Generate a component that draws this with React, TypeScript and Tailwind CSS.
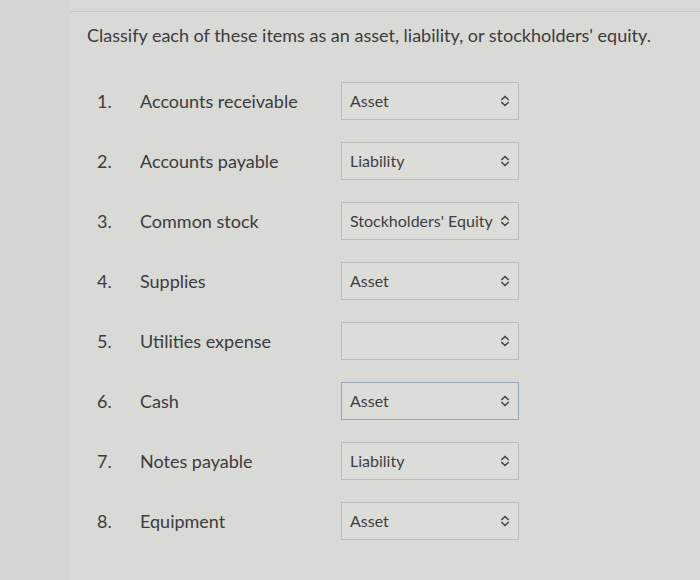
const items: { n: string; label: string; value: string; focused?: boolean }[] = [
  { n: "1.", label: "Accounts receivable", value: "Asset" },
  { n: "2.", label: "Accounts payable", value: "Liability" },
  { n: "3.", label: "Common stock", value: "Stockholders' Equity" },
  { n: "4.", label: "Supplies", value: "Asset" },
  { n: "5.", label: "Utilities expense", value: "" },
  { n: "6.", label: "Cash", value: "Asset", focused: true },
  { n: "7.", label: "Notes payable", value: "Liability" },
  { n: "8.", label: "Equipment", value: "Asset" },
];

function UpDown() {
  return (
    <svg width="10" height="12" viewBox="0 0 10 12" fill="none" stroke="#4a4a4a" strokeWidth="1.7" strokeLinecap="round" strokeLinejoin="round">
      <path d="M1.8 4.5 L5 1.5 L8.2 4.5" />
      <path d="M1.8 7.5 L5 10.5 L8.2 7.5" />
    </svg>
  );
}

export default function App() {
  return (
    <div
      className="w-[700px] h-[580px] flex bg-[#d9d9d5] text-[#3c3c3e] overflow-hidden"
      style={{ fontFamily: "Lato, 'Open Sans', sans-serif" }}
    >
      <div className="w-[70px] shrink-0 bg-[#d6d6d2]" />
      <div className="flex-1 mt-[11px] border-t border-[#c6c6c2]">
        <h1 className="ml-[17px] mt-[9px] text-[18px] leading-[28px] font-normal">
          Classify each of these items as an asset, liability, or stockholders' equity.
        </h1>
        <div className="mt-[22px]">
          {items.map((it) => (
            <div key={it.n} className="h-[60px] flex items-center">
              <span className="w-[70px] pl-[27px] text-[18px]">{it.n}</span>
              <span className="w-[201px] text-[18px]">{it.label}</span>
              <div
                className={
                  "w-[178px] h-[38px] flex items-center justify-between pl-[8px] pr-[8px] bg-[#dcdcd9] border " +
                  (it.focused ? "border-[#9aa6b8]" : "border-[#bcbcb8]")
                }
              >
                <span className="text-[16px] text-[#3f3f42]">{it.value}</span>
                <UpDown />
              </div>
            </div>
          ))}
        </div>
      </div>
    </div>
  );
}
